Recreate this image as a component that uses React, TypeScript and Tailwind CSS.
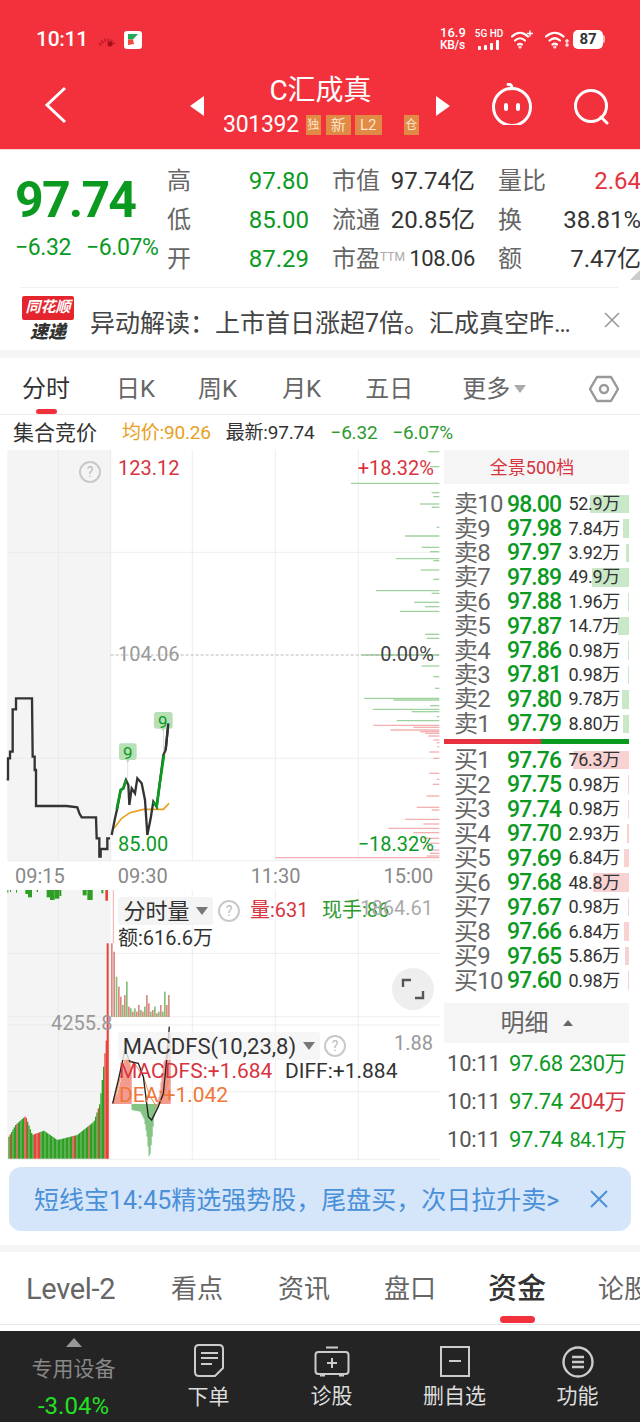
const asks = [
  ["卖10", "98.00", "52.9万", 39],
  ["卖9", "97.98", "7.84万", 6],
  ["卖8", "97.97", "3.92万", 3],
  ["卖7", "97.89", "49.9万", 37],
  ["卖6", "97.88", "1.96万", 1],
  ["卖5", "97.87", "14.7万", 11],
  ["卖4", "97.86", "0.98万", 1],
  ["卖3", "97.81", "0.98万", 1],
  ["卖2", "97.80", "9.78万", 7],
  ["卖1", "97.79", "8.80万", 6],
] as const;

const bids = [
  ["买1", "97.76", "76.3万", 56],
  ["买2", "97.75", "0.98万", 1],
  ["买3", "97.74", "0.98万", 1],
  ["买4", "97.70", "2.93万", 2],
  ["买5", "97.69", "6.84万", 5],
  ["买6", "97.68", "48.8万", 36],
  ["买7", "97.67", "0.98万", 1],
  ["买8", "97.66", "6.84万", 5],
  ["买9", "97.65", "5.86万", 4],
  ["买10", "97.60", "0.98万", 1],
] as const;

// depth bars on the right edge of the price chart: [y, x start]
const greenDepth = [
  [5, 1285], [50, 1290], [100, 1053], [128, 1295], [140, 1300], [162, 1260], [172, 1295], [232, 1310], [258, 1215],
  [292, 1265], [305, 1290], [326, 1188], [332, 1300], [360, 1262], [388, 1300], [422, 1128], [430, 1295], [457, 1243],
  [470, 1275], [484, 1200], [553, 1275], [565, 1280], [615, 1085], [648, 1265], [680, 1300], [715, 1305], [745, 1092],
  [750, 1180], [767, 1290], [778, 1118], [785, 1235], [800, 1310], [812, 1190],
];
const redDepth = [
  [826, 1120], [832, 1240], [840, 1172], [845, 1260], [850, 1275], [858, 1285], [870, 1300], [878, 1310], [890, 1312],
  [906, 1288], [925, 1300], [970, 1288], [988, 1310], [1003, 1298], [1038, 1280], [1072, 1250], [1080, 1295], [1108, 1215],
  [1122, 1270], [1135, 1165], [1148, 1240], [1165, 1270], [1180, 1280], [1200, 1285], [1210, 1290], [1218, 1280], [1223, 825],
];

const volBars = [
  [333, 190, 1], [340, 215, 1], [347, 290, 0], [354, 320, 1], [360, 350, 1], [366, 375, 0], [372, 345, 1], [378, 305, 0],
  [384, 380, 1], [390, 385, 0], [396, 395, 1], [402, 385, 0], [408, 395, 1], [414, 375, 1], [420, 390, 0], [426, 395, 1],
  [432, 380, 0], [438, 345, 1], [444, 370, 1], [450, 395, 0], [456, 390, 1], [462, 380, 0], [468, 400, 1], [474, 395, 0],
  [480, 375, 1], [486, 395, 0], [492, 335, 0], [498, 375, 1], [504, 345, 1],
];

function lerp(env: number[][], x: number) {
  for (let i = 0; i < env.length - 1; i++) {
    if (x >= env[i][0] && x <= env[i + 1][0]) {
      const t = (x - env[i][0]) / (env[i + 1][0] - env[i][0]);
      return env[i][1] + (env[i + 1][1] - env[i][1]) * t;
    }
  }
  return env[env.length - 1][1];
}

const auctionEnv = [[25, 770], [45, 735], [75, 708], [95, 765], [130, 752], [170, 780], [230, 765], [280, 725], [298, 670], [308, 570], [316, 490], [322, 440]];
const auctionRed = [[27, 31], [46, 50], [70, 78], [100, 120], [214, 224], [262, 266], [290, 296], [312, 322]];
const auctionBars: number[] = [];
for (let x = 25; x < 322; x += 4) auctionBars.push(x);

// bits hanging from the top of the volume panel: [x, width, bottom y]
const topStrip = [[22, 3, 38], [30, 3, 36], [48, 3, 38], [76, 8, 42], [84, 12, 52], [110, 4, 36], [140, 10, 52], [150, 14, 60], [164, 14, 56], [178, 6, 48], [248, 12, 46], [262, 16, 60], [304, 6, 40], [316, 8, 62]];

const macdEnv = [[335, 670], [350, 640], [365, 585], [380, 520], [392, 560], [395, 672], [470, 672], [476, 650], [490, 550], [505, 470], [510, 455]];
const macdDown = [[395, 690], [420, 695], [432, 720], [440, 770], [447, 838], [455, 770], [462, 700], [470, 680]];
const macdBars: number[] = [];
for (let x = 335; x < 511; x += 3) macdBars.push(x);

function Help({ className }: { className: string }) {
  return (
    <span className={`absolute flex h-[22px] w-[22px] items-center justify-center rounded-full border-2 border-[#c9c9c9] text-[14px] text-[#bbb] ${className}`}>?</span>
  );
}

function Caret({ className }: { className: string }) {
  return <span className={`inline-block h-0 w-0 border-x-[6px] border-t-[8px] border-x-transparent ${className}`} />;
}

function StatusIcons() {
  return (
    <div className="flex items-center text-white">
      <div className="flex w-[26px] flex-col text-[13px] font-medium leading-[12px]">
        <span>16.9</span>
        <span className="text-[12px] tracking-[-0.3px]">KB/s</span>
      </div>
      <div className="ml-[9px] flex w-[28px] flex-col items-center">
        <span className="text-[10px] leading-[12px] font-medium whitespace-nowrap">5G HD</span>
        <svg width="22" height="10" viewBox="0 0 22 10" fill="#fff">
          <rect x="0" y="6" width="3" height="4" rx="1" />
          <rect x="6" y="5" width="3" height="5" rx="1" />
          <rect x="12" y="3" width="3" height="7" rx="1" />
          <rect x="18" y="0" width="3" height="10" rx="1" />
        </svg>
      </div>
      <svg className="ml-[8px]" width="22" height="20" viewBox="0 0 22 20" fill="none" stroke="#fff" strokeWidth="2.2" strokeLinecap="round">
        <path d="M1 7.500c5-5 11-5 16 0" />
        <path d="M4 11.500c3-3 7-3 10 0" />
        <path d="M7 15.500c1-1 3-1 4 0" />
        <circle cx="9" cy="18" r=".5" />
        <path d="M19 2v5M16.500 4.500h5" strokeWidth="1.400" />
      </svg>
      <svg className="ml-[12px]" width="24" height="20" viewBox="0 0 24 20" fill="none" stroke="#fff" strokeWidth="2.200" strokeLinecap="round">
        <path d="M1 7.500c5.500-5 12-5 17.500 0" />
        <path d="M4.500 11.500c3.500-3 7-3 10.500 0" />
        <path d="M7.500 15.500c1.300-1 3-1 4.500 0" />
        <circle cx="9.800" cy="18" r=".5" />
        <circle cx="22" cy="12" r=".6" />
        <circle cx="22" cy="16" r=".6" />
      </svg>
      <div className="ml-[4px] flex items-center">
        <span className="flex h-[19px] w-[30px] items-center justify-center rounded-[5px] bg-white text-[15px] font-bold text-[#333]">87</span>
        <span className="h-[8px] w-[2px] rounded-r-sm bg-[#f9b3b3]" />
      </div>
    </div>
  );
}

function Header() {
  return (
    <div className="h-[149px] bg-[#f2313c] text-white">
      <div className="flex h-[78px] items-start justify-between pl-[36px] pr-[35px] pt-[27px]">
        <div className="flex items-center">
          <span className="text-[21px] leading-[25px] font-medium tracking-[-0.3px]">10:11</span>
          <svg className="ml-[10px]" width="18" height="16" viewBox="0 0 18 16" fill="none">
            <path d="M2 13a7.500 7.500 0 0 1 14 0" stroke="#c81e2c" strokeWidth="3.500" strokeDasharray="2 1" />
            <circle cx="12" cy="12" r="2.500" fill="#a80f1a" />
          </svg>
          <span className="ml-[8px] flex h-[18px] w-[18px] items-center justify-center rounded-[3px] bg-white">
            <svg width="12" height="13" viewBox="0 0 12 13">
              <path d="M1 1h10L6 6.500H1z" fill="#25a85a" />
              <path d="M1 6.500h5L7 11l-6 1z" fill="#ef4a3a" />
            </svg>
          </span>
        </div>
        <StatusIcons />
      </div>
      <div className="relative flex h-[71px] items-start">
        <svg className="ml-[44px] mt-[8px]" width="24" height="38" viewBox="0 0 24 38" fill="none" stroke="#fff" strokeWidth="3">
          <path d="M21 2 3 19l18 17" />
        </svg>
        <div className="ml-[122px] mt-[18px] h-0 w-0 border-y-[10px] border-r-[14px] border-y-transparent border-r-white" />
        <div className="ml-[18px] flex w-[197px] flex-col items-center">
          <span className="mt-[-5px] text-[28px] leading-[36px]">C汇成真</span>
          <div className="mt-[2px] ml-[1px] flex w-[197px] items-center self-start whitespace-nowrap">
            <span className="text-[23px] leading-[28px] tracking-[-0.3px]">301392</span>
            <span className="ml-[7px] flex h-[20px] w-[15px] shrink-0 items-center justify-center bg-[#e08a45] text-[12px] text-[#fde2c5]">独</span>
            <span className="ml-[5px] flex h-[20px] w-[25px] shrink-0 items-center justify-center bg-[#e08a45] text-[15px] text-[#fde2c5]">新</span>
            <span className="ml-[4px] flex h-[20px] w-[27px] shrink-0 items-center justify-center bg-[#e08a45] text-[15px] text-[#fde2c5]">L2</span>
            <span className="ml-[22px] flex h-[20px] w-[15px] shrink-0 items-center justify-center bg-[#e08a45] text-[12px] text-[#fde2c5]">仓</span>
          </div>
        </div>
        <div className="ml-[17px] mt-[18px] h-0 w-0 border-y-[10px] border-l-[14px] border-y-transparent border-l-white" />
        <svg className="ml-[41px] mt-[5px]" width="42" height="42" viewBox="0 0 42 42" fill="none" stroke="#fff" strokeWidth="3">
          <circle cx="21" cy="24" r="18.500" />
          <path d="M21 5c0-3-2-4-4-3.500" strokeLinecap="round" />
          <rect x="13" y="20" width="4" height="8" rx="2" fill="#fff" stroke="none" />
          <rect x="25" y="20" width="4" height="8" rx="2" fill="#fff" stroke="none" />
        </svg>
        <svg className="ml-[40px] mt-[11px]" width="38" height="36" viewBox="0 0 38 36" fill="none" stroke="#fff" strokeWidth="3">
          <circle cx="18" cy="17" r="15.500" />
          <path d="m28 28 6 6" strokeLinecap="round" />
        </svg>
      </div>
    </div>
  );
}

function QuoteRow({ label, value, valueClass }: { label: React.ReactNode; value: string; valueClass?: string }) {
  return (
    <div className="flex items-center justify-between whitespace-nowrap">
      <span className="text-[24px] text-[#666]">{label}</span>
      <span className={`text-[24px] ${valueClass ?? "text-[#333]"}`}>{value}</span>
    </div>
  );
}

function Quote() {
  return (
    <div className="relative mx-0 flex h-[138px] overflow-hidden bg-white">
      <div className="w-[167px] shrink-0 pl-[15px]">
        <div className="mt-[20px] text-[50px] font-bold leading-[60px] tracking-[-1.800px] text-[#0b9a1f]">97.74</div>
        <div className="mt-[3px] flex whitespace-nowrap text-[23px] leading-[30px] tracking-[-0.4px] text-[#0b9a1f]">
          <span>−6.32</span>
          <span className="ml-[15px]">−6.07%</span>
        </div>
      </div>
      <div className="mt-[11px] grid h-[117px] grid-cols-[142px_143px_143px] grid-rows-3 gap-x-[23px]">
        <QuoteRow label="高" value="97.80" valueClass="text-[#0b9a1f]" />
        <QuoteRow label="市值" value="97.74亿" />
        <QuoteRow label="量比" value="2.64" valueClass="text-[#e5323e]" />
        <QuoteRow label="低" value="85.00" valueClass="text-[#0b9a1f]" />
        <QuoteRow label="流通" value="20.85亿" />
        <QuoteRow label="换" value="38.81%" />
        <QuoteRow label="开" value="87.29" valueClass="text-[#0b9a1f]" />
        <div className="flex items-center justify-between whitespace-nowrap">
          <span className="text-[24px] text-[#666]">市盈<sup className="text-[12px] text-[#aaa]">TTM</sup></span>
          <span className="text-[22px] tracking-[-0.3px] text-[#333]">108.06</span>
        </div>
        <QuoteRow label="额" value="7.47亿" />
      </div>
      <div className="absolute bottom-[8px] right-0 h-0 w-0 border-b-[10px] border-l-[10px] border-b-[#ccc] border-l-transparent" />
      <div className="absolute bottom-0 left-[20px] h-px w-[598px] bg-[#f0f0f0]" />
    </div>
  );
}

function News() {
  return (
    <div className="flex h-[62px] items-center bg-white">
      <div className="ml-[22px] flex w-[52px] flex-col items-center">
        <span className="flex h-[24px] w-[52px] items-center justify-center rounded-[2px] bg-[#e5252e] text-[15px] font-bold italic leading-none text-white">同花顺</span>
        <span className="mt-[1px] text-[18px] font-black italic leading-[22px] text-[#333]">速递</span>
      </div>
      <span className="ml-[16px] mt-[10px] w-[490px] whitespace-nowrap text-[25px] leading-[32px] text-[#444]">异动解读：上市首日涨超7倍。汇成真空昨…</span>
      <svg className="ml-[24px] mt-[2px]" width="16" height="16" viewBox="0 0 16 16" stroke="#999" strokeWidth="1.600">
        <path d="m1 1 14 14M15 1 1 15" />
      </svg>
    </div>
  );
}

function ChartTabs() {
  return (
    <div className="relative flex h-[57px] items-center border-b border-[#eee] bg-white pt-[6px] text-[24px] text-[#666]">
      <span className="ml-[22px] text-[#333]">分时</span>
      <span className="ml-[46px]">日K</span>
      <span className="ml-[43px]">周K</span>
      <span className="ml-[45px]">月K</span>
      <span className="ml-[44px]">五日</span>
      <span className="ml-[49px]">更多</span>
      <Caret className="ml-[4px] border-t-[#aaa]" />
      <svg className="ml-[63px]" width="30" height="30" viewBox="0 0 30 30" fill="none" stroke="#999" strokeWidth="2.400">
        <path d="M8 3h14l7 12-7 12H8L1 15z" strokeLinejoin="round" />
        <circle cx="15" cy="15" r="4" />
      </svg>
      <span className="absolute bottom-0 left-[36px] h-[5px] w-[21px] rounded-full bg-[#f2313c]" />
    </div>
  );
}

function InfoRow() {
  return (
    <div className="flex h-[33px] items-center whitespace-nowrap bg-white pt-[4px]">
      <span className="ml-[13px] text-[21px] text-[#333]">集合竞价</span>
      <span className="ml-[25px] text-[19px] tracking-[-0.2px] text-[#e8a020]">均价:90.26</span>
      <span className="ml-[15px] text-[19px] tracking-[-0.2px] text-[#333]">最新:97.74</span>
      <span className="ml-[16px] text-[19px] tracking-[-0.2px] text-[#2d9a2d]">−6.32</span>
      <span className="ml-[15px] text-[19px] tracking-[-0.2px] text-[#2d9a2d]">−6.07%</span>
    </div>
  );
}

function PriceChart() {
  return (
    <div className="relative h-[412px] w-[440px]">
      <svg width="440" height="412" viewBox="0 0 1320 1236" fill="none">
        <rect x="22" y="0" width="310" height="1232" fill="#f4f4f4" />
        {[175, 332, 577, 826, 1075].map((x) => (
          <line key={x} x1={x} y1="0" x2={x} y2="1232" stroke="#e6e6e6" strokeWidth="2" />
        ))}
        {[307, 925, 1232].map((y) => (
          <line key={y} x1="22" y1={y} x2="1320" y2={y} stroke="#e6e6e6" strokeWidth="2" />
        ))}
        {greenDepth.map(([y, x]) => (
          <line key={y} x1={x} y1={y} x2="1318" y2={y} stroke="#9ed29e" strokeWidth="4" />
        ))}
        {redDepth.map(([y, x]) => (
          <line key={y} x1={x} y1={y} x2="1318" y2={y} stroke="#f4b0b0" strokeWidth="4" />
        ))}
        <line x1="332" y1="615" x2="1320" y2="615" stroke="#999" strokeWidth="2" strokeDasharray="9 6" />
        <polyline
          points="20,988 24,988 24,925 30,925 30,905 38,905 38,778 48,778 48,745 96,745 98,920 104,920 104,960 108,960 108,1068 200,1068 232,1072 238,1090 245,1102 288,1102 290,1165 298,1165 298,1220 302,1220 302,1197 322,1197 322,1165 330,1165"
          stroke="#333"
          strokeWidth="7"
        />
        <polyline points="342,1135 365,1105 390,1088 430,1078 490,1078 507,1060" stroke="#e8a020" strokeWidth="5" />
        <polyline
          points="335,1155 345,1105 352,1075 362,1020 370,1015 378,990 385,1005 388,1065 395,1015 405,1030 412,985 425,1000 435,1050 442,1155 452,1105 460,1055 470,1070 480,995 490,915 497,900 505,820"
          stroke="#333"
          strokeWidth="7"
        />
        <polyline points="350,1078 362,1020 370,1015 378,990" stroke="#0b9a1f" strokeWidth="8" />
        <polyline points="460,1055 470,1070 480,995 492,915" stroke="#0b9a1f" strokeWidth="8" />
        <path d="M357 888q0-8 8-8h37q8 0 8 8v34q0 8-8 8h-14l-5 10-5-10h-13q-8 0-8-8z" fill="#b7e0b7" />
        <path d="M462 794q0-8 8-8h40q8 0 8 8v34q0 8-8 8h-16l-5 9-5-9h-14q-8 0-8-8z" fill="#b7e0b7" />
        <line x1="383" y1="940" x2="383" y2="988" stroke="#aaa" strokeWidth="2" strokeDasharray="3 3" />
        <line x1="491" y1="845" x2="491" y2="910" stroke="#888" strokeWidth="2" strokeDasharray="3 3" />
        <polyline points="497,900 505,820" stroke="#333" strokeWidth="7" />
      </svg>
      <Help className="left-[79px] top-[11px]" />
      <span className="absolute left-[118px] top-[5px] text-[20px] leading-[26px] text-[#d7343f]">123.12</span>
      <span className="absolute right-[6px] top-[5px] text-[20px] leading-[26px] text-[#d7343f]">+18.32%</span>
      <span className="absolute left-[118px] top-[191px] text-[20px] leading-[26px] text-[#999]">104.06</span>
      <span className="absolute right-[6px] top-[191px] text-[20px] leading-[26px] text-[#444]">0.00%</span>
      <span className="absolute left-[118px] top-[381px] text-[20px] leading-[26px] text-[#0b9a1f]">85.00</span>
      <span className="absolute right-[6px] top-[381px] text-[20px] leading-[26px] text-[#0b9a1f]">−18.32%</span>
      <span className="absolute left-[123px] top-[291px] text-[17px] leading-[24px] text-[#0b9a1f]">9</span>
      <span className="absolute left-[158px] top-[260px] text-[17px] leading-[24px] text-[#0b9a1f]">9</span>
    </div>
  );
}

function TimeAxis() {
  return (
    <div className="flex h-[28px] items-center text-[20px] text-[#888]">
      <span className="ml-[15px]">09:15</span>
      <span className="ml-[53px]">09:30</span>
      <span className="ml-[83px]">11:30</span>
      <span className="ml-[83px]">15:00</span>
    </div>
  );
}

function SubCharts() {
  return (
    <div className="relative h-[270px] w-[440px]">
      <svg width="440" height="270" viewBox="0 30 1320 810" fill="none">
        <rect x="22" y="30" width="310" height="808" fill="#f4f4f4" />
        {[175, 577, 826, 1075].map((x) => (
          <line key={x} x1={x} y1="30" x2={x} y2="838" stroke="#e6e6e6" strokeWidth="2" />
        ))}
        {[220, 410, 435, 635, 838].map((y) => (
          <line key={y} x1="22" y1={y} x2="1320" y2={y} stroke="#e6e6e6" strokeWidth="2" />
        ))}
        {auctionBars.map((x) => (
          <rect
            key={x}
            x={x}
            y={lerp(auctionEnv, x)}
            width="4"
            height={836 - lerp(auctionEnv, x)}
            fill={auctionRed.some(([a, b]) => x >= a && x <= b) ? "#e8433a" : "#2f9e25"}
          />
        ))}
        <rect x="320" y="190" width="6" height="646" fill="#e8433a" />
        <line x1="340" y1="30" x2="340" y2="190" stroke="#f08080" strokeWidth="2" />
        {topStrip.map(([x, w, y]) => (
          <rect key={x} x={x} y="30" width={w} height={y - 30} fill={x === 316 ? "#e8433a" : "#2f9e25"} />
        ))}
        {volBars.map(([x, y, up]) => (
          <rect key={x} x={x} y={y} width="5" height={411 - y} fill={up ? "#d98a80" : "#86bd78"} />
        ))}
        {macdBars.map((x) => (
          <rect key={x} x={x} y={lerp(macdEnv, x)} width="2.500" height={Math.max(0, 672 - lerp(macdEnv, x))} fill="#ef6a5a" />
        ))}
        {macdBars
          .filter((x) => x >= 395 && x <= 470)
          .map((x) => (
            <rect key={x} x={x} y="672" width="2.500" height={lerp(macdDown, x) - 672} fill="#4aa84a" />
          ))}
        <polyline points="340,670 375,540 400,545 430,590 450,650 470,680 490,650 505,600" stroke="#f08a4b" strokeWidth="3" />
        <polyline points="338,670 355,600 375,510 390,545 415,550 430,590 445,710 455,720 475,680 490,640 500,540 508,440" stroke="#222" strokeWidth="4" />
      </svg>

      <span className="absolute left-[118px] top-[7px] flex h-[28px] w-[95px] items-center justify-center gap-[6px] rounded-[3px] bg-[#f4f4f4] text-[22px] text-[#333]">
        分时量
        <Caret className="border-t-[#777]" />
      </span>
      <Help className="left-[218px] top-[10px]" />
      <span className="absolute left-[250px] top-[6px] text-[20px] leading-[28px] text-[#d7343f]">量:631</span>
      <span className="absolute left-[322px] top-[6px] whitespace-nowrap text-[20px] leading-[28px] text-[#2d9a2d]">现手:86</span>
      <span className="absolute right-[7px] top-[5px] text-[20px] leading-[26px] text-[#aaa]">1864.61</span>
      <span className="absolute left-[118px] top-[35px] text-[20px] leading-[26px] text-[#333]">额:616.6万</span>
      <span className="absolute left-[392px] top-[78px] flex h-[42px] w-[42px] items-center justify-center rounded-full bg-[#eeeeee]">
        <svg width="24" height="24" viewBox="0 0 24 24" fill="none" stroke="#555" strokeWidth="2.400">
          <path d="M2 10V3h8M22 14v7h-8" />
        </svg>
      </span>
      <span className="absolute left-[51px] top-[120px] text-[20px] leading-[26px] text-[#999]">4255.8</span>
      <span className="absolute left-[118px] top-[142px] flex h-[28px] w-[202px] items-center justify-center gap-[7px] whitespace-nowrap rounded-[3px] bg-[#f4f4f4]/80 text-[22px] text-[#333]">
        MACDFS(10,23,8)
        <Caret className="border-t-[#777]" />
      </span>
      <Help className="left-[324px] top-[145px]" />
      <span className="absolute right-[7px] top-[140px] text-[20px] leading-[26px] text-[#999]">1.88</span>
      <span className="absolute left-[119px] top-[168px] whitespace-nowrap text-[21px] leading-[26px] text-[#d7343f]">MACDFS:+1.684</span>
      <span className="absolute left-[285px] top-[168px] whitespace-nowrap text-[21px] leading-[26px] text-[#333]">DIFF:+1.884</span>
      <span className="absolute left-[119px] top-[192px] whitespace-nowrap text-[21px] leading-[26px] text-[#f0763a]">DEA:+1.042</span>
    </div>
  );
}

function DepthRow({ row, barClass, rowClass }: { row: readonly [string, string, string, number]; barClass: string; rowClass: string }) {
  const [label, price, vol, pct] = row;
  return (
    <div className={`relative flex items-center whitespace-nowrap ${rowClass}`}>
      <span className={`absolute bottom-[3px] right-[11px] top-[3px] ${barClass}`} style={{ width: `${pct}px` }} />
      <span className="relative w-[63px] pl-[10px] text-[24px] leading-none tracking-[-0.8px] text-[#666]">{label}</span>
      <span className="relative w-[57px] text-[23px] font-medium leading-none tracking-[-0.9px] text-[#0b9a1f]">{price}</span>
      <span className="relative w-[56px] text-right text-[18px] leading-none tracking-[-0.3px] text-[#333]">{vol}</span>
    </div>
  );
}

function OrderBook() {
  return (
    <div className="w-[198px] shrink-0 pl-[2px]">
      <div className="flex h-[34px] w-[185px] items-center justify-center bg-[#f5f5f5] pr-[9px] text-[18px] text-[#d7343f]">全景500档</div>
      <div className="mt-[8px] flex flex-col">
        {asks.map((row) => (
          <DepthRow key={row[0]} row={row} barClass="bg-[#c8e8c8]" rowClass="h-[24.400px]" />
        ))}
      </div>
      <div className="mt-[3px] flex h-[5px] w-[185px]">
        <span className="w-[97px] bg-[#e5323e]" />
        <span className="flex-1 bg-[#0b9a1f]" />
      </div>
      <div className="mt-[4px] flex flex-col">
        {bids.map((row) => (
          <DepthRow key={row[0]} row={row} barClass="bg-[#f8d2d2]" rowClass="h-[24.500px]" />
        ))}
      </div>
      <div className="mt-[10px] flex h-[40px] w-[185px] items-center justify-center bg-[#f5f5f5] text-[24px] text-[#666]">
        明细
        <span className="ml-[14px] h-0 w-0 border-x-[5px] border-b-[6px] border-x-transparent border-b-[#666]" />
      </div>
      <div className="flex flex-col whitespace-nowrap pt-[2px] text-[22px] leading-none">
        {[
          ["97.68", "230万", "text-[#0b9a1f]"],
          ["97.74", "204万", "text-[#d7343f]"],
          ["97.74", "84.1万", "text-[20px] text-[#0b9a1f]"],
        ].map(([price, amount, color], i) => (
          <div key={i} className="flex h-[38px] items-center">
            <span className="ml-[3px] w-[62px] tracking-[-0.2px] text-[#555]">10:11</span>
            <span className="w-[60px] tracking-[-0.3px] text-[#0b9a1f]">{price}</span>
            <span className={`w-[57px] text-right tracking-[-0.5px] ${color}`}>{amount}</span>
          </div>
        ))}
      </div>
    </div>
  );
}

function Banner() {
  return (
    <div className="mx-[9px] mt-[7px] flex h-[64px] items-center rounded-[12px] bg-[#d6e6fa] text-[25px] text-[#4a90d8]">
      <span className="ml-[25px] mt-[4px] w-[556px] whitespace-nowrap">短线宝14:45精选强势股，尾盘买，次日拉升卖&gt;</span>
      <svg width="18" height="18" viewBox="0 0 18 18" stroke="#4a90d8" strokeWidth="2">
        <path d="m1 1 16 16M17 1 1 17" />
      </svg>
    </div>
  );
}

function InfoTabs() {
  return (
    <div className="relative flex h-[73px] items-center overflow-hidden whitespace-nowrap border-b border-[#e6e6e6] pt-[3px] text-[26px] text-[#666]">
      <span className="ml-[26px] w-[145px] shrink-0 text-[29px] tracking-[-0.3px]">Level-2</span>
      <span className="w-[107px] shrink-0">看点</span>
      <span className="w-[106px] shrink-0">资讯</span>
      <span className="w-[104px] shrink-0">盘口</span>
      <span className="w-[110px] shrink-0 text-[29px] font-medium text-[#333]">资金</span>
      <span className="shrink-0">论股</span>
      <span className="absolute bottom-[1px] left-[500px] h-[7px] w-[35px] rounded-full bg-[#f2313c]" />
    </div>
  );
}

function BottomBar() {
  const item = "flex w-[123px] flex-col items-center";
  return (
    <div className="mt-[6px] flex h-[91px] bg-[#242424] text-[21px] text-[#dddddd]">
      <div className="flex w-[147px] flex-col items-center">
        <span className="mt-[7px] h-0 w-0 border-x-[8px] border-b-[9px] border-x-transparent border-b-[#999]" />
        <span className="mt-[7px] text-[21px] leading-[30px] text-[#888]">专用设备</span>
        <span className="mt-[7px] text-[24px] leading-[30px] text-[#22e022]">-3.04%</span>
      </div>
      <div className={item}>
        <svg className="mt-[13px]" width="30" height="33" viewBox="0 0 30 33" fill="none" stroke="#ccc" strokeWidth="2">
          <path d="M5 1h20q4 0 4 4v19l-8 8H5q-4 0-4-4V5q0-4 4-4z" />
          <path d="M7 9h17M7 14h17M7 20h11" />
        </svg>
        <span className="mt-[5px] leading-[30px]">下单</span>
      </div>
      <div className={item}>
        <svg className="mt-[15px]" width="36" height="31" viewBox="0 0 36 31" fill="none" stroke="#ccc" strokeWidth="2">
          <rect x="1.500" y="6" width="33" height="22" rx="3" />
          <path d="M12 1.500h12M13 17h10M18 12v10" />
          <path d="M6 29h5M25 29h5" strokeWidth="3" />
        </svg>
        <span className="mt-[4px] leading-[30px]">诊股</span>
      </div>
      <div className={item}>
        <svg className="mt-[15px]" width="30" height="31" viewBox="0 0 30 31" fill="none" stroke="#ccc" strokeWidth="2">
          <rect x="1" y="1" width="28" height="29" />
          <path d="M9 15h12" />
        </svg>
        <span className="mt-[4px] leading-[30px] whitespace-nowrap">删自选</span>
      </div>
      <div className={item}>
        <svg className="mt-[15px]" width="32" height="32" viewBox="0 0 32 32" fill="none" stroke="#ccc" strokeWidth="2.400">
          <circle cx="16" cy="16" r="14.500" />
          <path d="M10 11h12M10 16h12M10 21h12" />
        </svg>
        <span className="mt-[3px] leading-[30px]">功能</span>
      </div>
    </div>
  );
}

export default function App() {
  return (
    <div className="h-[1422px] w-[640px] overflow-hidden bg-white font-['Roboto','Noto_Sans_CJK_SC',sans-serif]">
      <Header />
      <div className="h-px bg-[#f8d8d0]" />
      <Quote />
      <News />
      <div className="h-[8px] bg-[#f5f5f5]" />
      <ChartTabs />
      <InfoRow />
      <div className="flex pt-[2px]">
        <div className="w-[442px] shrink-0">
          <PriceChart />
          <TimeAxis />
          <SubCharts />
        </div>
        <OrderBook />
      </div>
      <Banner />
      <div className="mt-[14px] h-[7px] bg-[#f5f5f5]" />
      <InfoTabs />
      <BottomBar />
    </div>
  );
}
